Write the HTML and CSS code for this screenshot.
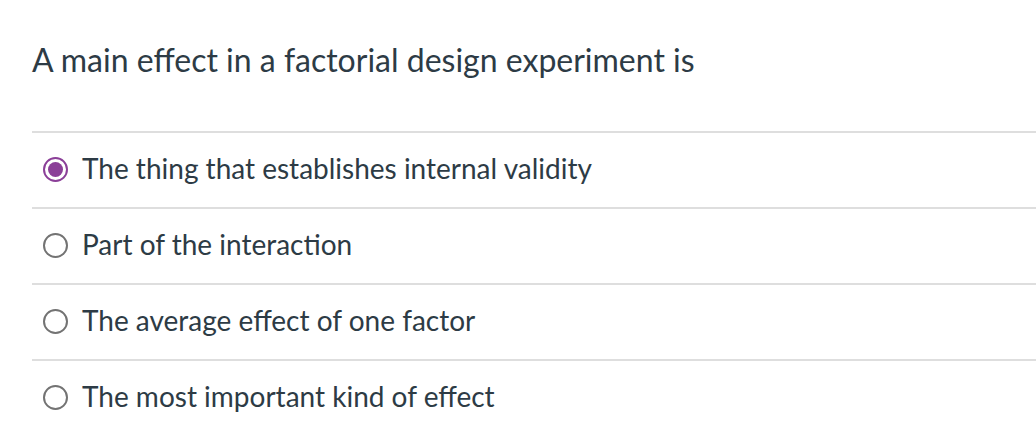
FILE: index.html
```html
<!DOCTYPE html>
<html>
<head>
<meta charset="utf-8">
<link rel="stylesheet" href="styles.css">
</head>
<body>
<div class="question">
  <div class="question-text">A main effect in a factorial design experiment is</div>
  <div class="answers">
    <div class="answer">
      <span class="radio selected"></span>
      <span class="label">The thing that establishes internal validity</span>
    </div>
    <div class="answer">
      <span class="radio"></span>
      <span class="label">Part of the interaction</span>
    </div>
    <div class="answer">
      <span class="radio"></span>
      <span class="label">The average effect of one factor</span>
    </div>
    <div class="answer last">
      <span class="radio"></span>
      <span class="label">The most important kind of effect</span>
    </div>
  </div>
</div>
</body>
</html>
```
FILE: styles.css
```css
html, body {
  margin: 0;
  padding: 0;
  background: #ffffff;
}
body {
  font-family: Lato, "Noto Sans", sans-serif;
  color: #2d3b45;
}
.question {
  padding: 36px 0 0 32px;
}
.question-text {
  font-size: 32px;
  line-height: 48px;
  padding-left: 0;
}
.answers {
  margin-top: 47px;
}
.answer {
  display: flex;
  align-items: center;
  height: 74px;
  border-top: 2px solid #dedede;
  padding-left: 11px;
}
.radio {
  box-sizing: border-box;
  width: 25px;
  height: 25px;
  border-radius: 50%;
  border: 2px solid #737373;
  flex: none;
  margin-right: 14px;
  margin-bottom: 1px;
  position: relative;
}
.radio.selected {
  border-color: #8b3f98;
}
.radio.selected::after {
  content: "";
  position: absolute;
  left: 3px;
  top: 3px;
  width: 15px;
  height: 15px;
  border-radius: 50%;
  background: #8b3f98;
}
.label {
  font-size: 28px;
  margin-bottom: 4px;
}
```
